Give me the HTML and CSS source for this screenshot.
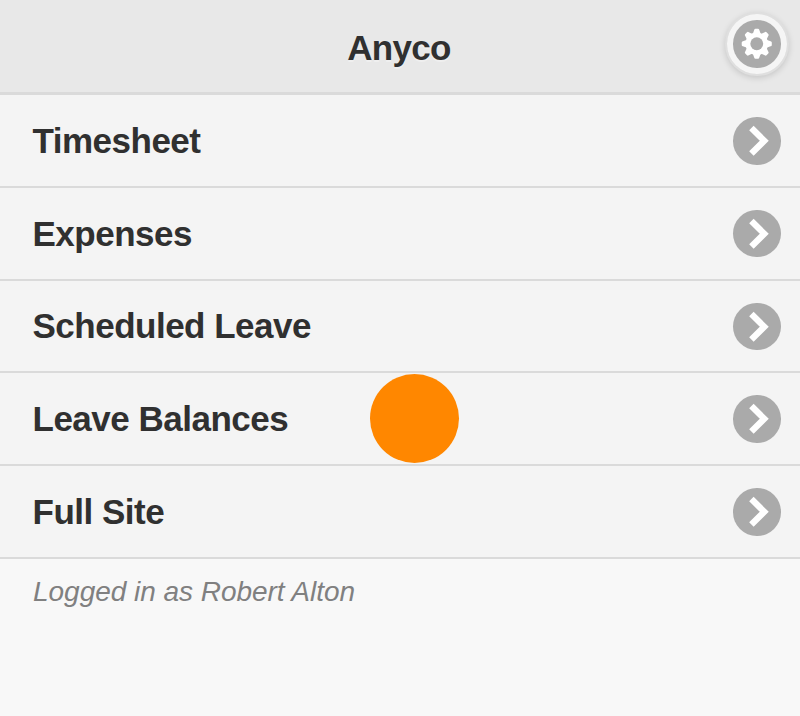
FILE: index.html
```html
<!DOCTYPE html>
<html lang="en">
  <head>
    <meta charset="utf-8">
    <title>Anyco</title>
    <link rel="stylesheet" href="styles.css">
  </head>
  <body>
  <div class="header">
    <h1>Anyco</h1>
    <a href="#" class="settings-btn" aria-label="Settings">
      <span class="icon">
        <svg viewBox="-24 -24 48 48">
          <g fill="#fff">
            <path id="teeth" d="M-4.3 -9L-2.6 -14Q-2.3 -15.2 -1.2 -15.2H1.2Q2.3 -15.2 2.6 -14L4.3 -9V9L2.6 14Q2.3 15.2 1.2 15.2H-1.2Q-2.3 15.2 -2.6 14L-4.3 9Z"/>
            <use href="#teeth" transform="rotate(45)"/>
            <use href="#teeth" transform="rotate(90)"/>
            <use href="#teeth" transform="rotate(135)"/>
            <circle r="11.4"/>
          </g>
          <circle r="6.5" fill="#aaa"/>
        </svg>
      </span>
    </a>
  </div>

  <ul class="menu">
    <li><a href="#">Timesheet <span class="icon"><svg viewBox="0 0 48 48"><path d="M18.6 11.2l13 12.9-13 12.9"/></svg></span></a></li>
    <li><a href="#">Expenses <span class="icon"><svg viewBox="0 0 48 48"><path d="M18.6 11.2l13 12.9-13 12.9"/></svg></span></a></li>
    <li><a href="#">Scheduled Leave <span class="icon"><svg viewBox="0 0 48 48"><path d="M18.6 11.2l13 12.9-13 12.9"/></svg></span></a></li>
    <li><a href="#">Leave Balances <span class="icon"><svg viewBox="0 0 48 48"><path d="M18.6 11.2l13 12.9-13 12.9"/></svg></span></a><span class="tap-marker"></span></li>
    <li><a href="#">Full Site <span class="icon"><svg viewBox="0 0 48 48"><path d="M18.6 11.2l13 12.9-13 12.9"/></svg></span></a></li>
  </ul>

  <p class="login-info">Logged in as Robert Alton</p>
  </body>
</html>
```
FILE: styles.css
```css
* {
  margin: 0;
  padding: 0;
  box-sizing: border-box;
}

body {
  min-height: 100vh;
  background: #f8f8f8;
  color: #303030;
  font-family: "Liberation Sans", Arial, sans-serif;
}

.header {
  display: grid;
  grid-template-columns: 1fr auto 1fr;
  align-items: center;
  height: 95px;
  padding: 0 11px;
  background: #e8e8e8;
  border-bottom: 3px solid #dadada;
}

.header h1 {
  grid-column: 2;
  padding: 3px 2px 0 0;
  font-size: 35px;
  letter-spacing: -0.7px;
  line-height: 44px;
  text-shadow: 0 2px 0 #efefef;
}

.settings-btn {
  display: flex;
  align-items: center;
  justify-content: center;
  justify-self: end;
  width: 64px;
  height: 64px;
  margin-top: -4px;
  border-radius: 50%;
  background: #f5f5f5;
  background-clip: padding-box;
  border: 2px solid #dfdfdf;
  box-shadow: 0 2px 6px rgba(0,0,0,0.15);
}

.icon {
  width: 47.5px;
  height: 47.5px;
  border-radius: 50%;
  background: #aaa;
}

.icon svg {
  display: block;
  width: 100%;
  height: 100%;
}

.menu {
  list-style: none;
}

.menu li {
  position: relative;
}

.menu a {
  display: flex;
  align-items: center;
  justify-content: space-between;
  height: 92.75px;
  padding: 1px 19.2px 0 32.5px;
  background: #f4f4f4;
  border-bottom: 2px solid #dadada;
  color: #303030;
  font-size: 35px;
  font-weight: bold;
  letter-spacing: -0.5px;
  text-decoration: none;
}

.menu path {
  fill: none;
  stroke: #fff;
  stroke-width: 6.4;
}

.tap-marker {
  position: absolute;
  top: 1px;
  left: 370px;
  width: 89px;
  height: 89px;
  border-radius: 50%;
  background: #ff8700;
}

.login-info {
  padding: 17px 33px;
  color: #808080;
  font-size: 28px;
  font-style: italic;
  letter-spacing: -0.03px;
}
```
